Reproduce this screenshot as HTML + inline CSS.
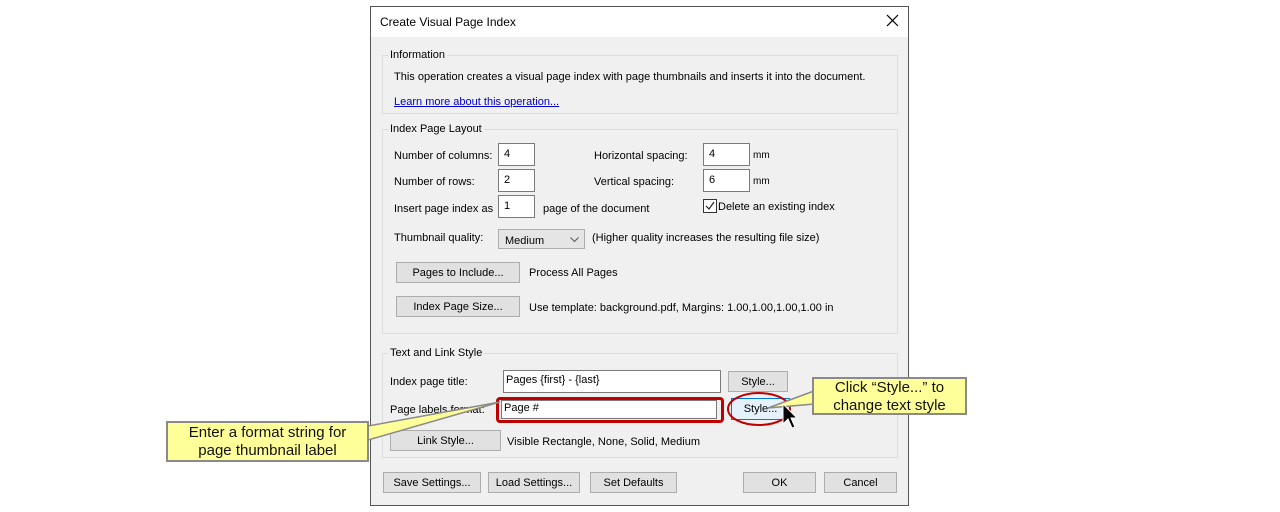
<!DOCTYPE html>
<html><head><meta charset="utf-8"><style>
body{margin:0;width:1280px;height:512px;background:#fff;position:relative;overflow:hidden;font-family:"Liberation Sans",sans-serif;font-size:11px;color:#000}
.a{position:absolute;white-space:nowrap}
.t{position:absolute;white-space:nowrap;line-height:14px}
.g{position:absolute;border:1px solid #dcdcdc}
.lg{position:absolute;background:#f0f0f0;padding:0 2px;line-height:14px}
.in{position:absolute;background:#fff;border:1px solid #7a7a7a;box-sizing:border-box;padding:2px 5px;line-height:16px}
.b{position:absolute;background:#e1e1e1;border:1px solid #adadad;box-sizing:border-box;text-align:center;line-height:19px}
.co{position:absolute;background:#ffff99;border:2px solid #8a8a8a;box-sizing:border-box;text-align:center;font-size:15px;line-height:18px;color:#111}
</style></head><body>
<div class="a" style="left:370px;top:6px;width:537px;height:498px;border:1px solid #555;background:#f0f0f0"></div>
<div class="a" style="left:371px;top:7px;width:537px;height:30px;background:#fff"></div>
<div class="t" style="left:380px;top:15px;font-size:12px">Create Visual Page Index</div>
<svg class="a" style="left:886px;top:14px" width="13" height="13"><path d="M1 1L12 12M12 1L1 12" stroke="#000" stroke-width="1.2"/></svg>

<div class="g" style="left:382px;top:55px;width:514px;height:57px"></div>
<div class="lg" style="left:388px;top:48px">Information</div>
<div class="t" style="left:394px;top:70px">This operation creates a visual page index with page thumbnails and inserts it into the document.</div>
<div class="t" style="left:394px;top:95px;color:#0000cc;text-decoration:underline">Learn more about this operation...</div>

<div class="g" style="left:382px;top:129px;width:514px;height:203px"></div>
<div class="lg" style="left:388px;top:122px">Index Page Layout</div>
<div class="t" style="left:394px;top:149px">Number of columns:</div>
<div class="in" style="left:498px;top:143px;width:37px;height:23px">4</div>
<div class="t" style="left:594px;top:149px">Horizontal spacing:</div>
<div class="in" style="left:703px;top:143px;width:47px;height:23px">4</div>
<div class="t" style="left:753px;top:149px;font-size:10px">mm</div>
<div class="t" style="left:394px;top:175px">Number of rows:</div>
<div class="in" style="left:498px;top:169px;width:37px;height:23px">2</div>
<div class="t" style="left:594px;top:175px">Vertical spacing:</div>
<div class="in" style="left:703px;top:169px;width:47px;height:23px">6</div>
<div class="t" style="left:753px;top:175px;font-size:10px">mm</div>
<div class="t" style="left:394px;top:202px">Insert page index as</div>
<div class="in" style="left:498px;top:195px;width:37px;height:23px">1</div>
<div class="t" style="left:543px;top:202px">page of the document</div>
<svg class="a" style="left:703px;top:199px" width="14" height="14"><rect x="0.5" y="0.5" width="13" height="13" fill="#fff" stroke="#333"/><path d="M3 7l3 3 5-7" fill="none" stroke="#222" stroke-width="1.2"/></svg>
<div class="t" style="left:718px;top:200px">Delete an existing index</div>
<div class="t" style="left:394px;top:231px">Thumbnail quality:</div>
<div class="a" style="left:498px;top:229px;width:87px;height:20px;background:#e5e5e5;border:1px solid #adadad;box-sizing:border-box"></div>
<div class="t" style="left:505px;top:234px">Medium</div>
<svg class="a" style="left:570px;top:237px" width="9" height="6"><path d="M0.5 0.5L4.5 4.5L8.5 0.5" fill="none" stroke="#555"/></svg>
<div class="t" style="left:592px;top:231px">(Higher quality increases the resulting file size)</div>
<div class="b" style="left:396px;top:262px;width:124px;height:21px;line-height:20px">Pages to Include...</div>
<div class="t" style="left:529px;top:266px">Process All Pages</div>
<div class="b" style="left:396px;top:296px;width:124px;height:21px;line-height:20px">Index Page Size...</div>
<div class="t" style="left:529px;top:301px">Use template: background.pdf, Margins: 1.00,1.00,1.00,1.00 in</div>

<div class="g" style="left:382px;top:353px;width:514px;height:103px"></div>
<div class="lg" style="left:388px;top:346px">Text and Link Style</div>
<div class="t" style="left:390px;top:375px">Index page title:</div>
<div class="in" style="left:503px;top:370px;width:218px;height:23px;padding:1px 2px">Pages {first} - {last}</div>
<div class="b" style="left:728px;top:371px;width:60px;height:21px;line-height:20px">Style...</div>
<div class="t" style="left:390px;top:403px">Page labels format:</div>
<div class="a" style="left:496px;top:397px;width:222px;height:20px;border:3px solid #c00000;border-radius:4px"></div>
<div class="in" style="left:501px;top:400px;width:216px;height:19px;padding:0 2px;line-height:14px">Page #</div>
<div class="b" style="left:731px;top:398px;width:59px;height:22px;line-height:21px;background:#e5f1fb;border-color:#0078d7">Style...</div>
<div class="b" style="left:390px;top:430px;width:111px;height:21px;line-height:20px">Link Style...</div>
<div class="t" style="left:507px;top:435px">Visible Rectangle, None, Solid, Medium</div>

<div class="b" style="left:383px;top:472px;width:98px;height:21px;line-height:20px">Save Settings...</div>
<div class="b" style="left:488px;top:472px;width:92px;height:21px;line-height:20px">Load Settings...</div>
<div class="b" style="left:590px;top:472px;width:87px;height:21px;line-height:20px">Set Defaults</div>
<div class="b" style="left:743px;top:472px;width:73px;height:21px;line-height:20px">OK</div>
<div class="b" style="left:824px;top:472px;width:73px;height:21px;line-height:20px">Cancel</div>

<svg class="a" style="left:0;top:0" width="1280" height="512">
<ellipse cx="759" cy="409" rx="31" ry="16" fill="none" stroke="#c00000" stroke-width="2"/>
<polygon points="368,426 500,402 368,440" fill="#ffff99" stroke="#8a8a8a" stroke-width="1.5"/>
<polygon points="814,391 768,408 814,404" fill="#ffff99" stroke="#8a8a8a" stroke-width="1.5"/>
<path d="M783,404 L783,424 L788,419 L792,428 L795,427 L791,418 L797,418 Z" fill="#000" stroke="#fff" stroke-width="1"/>
</svg>
<div class="co" style="left:166px;top:421px;width:203px;height:41px;padding-top:1px">Enter a format string for<br>page thumbnail label</div>
<div class="co" style="left:812px;top:377px;width:155px;height:38px;padding-top:0">Click “Style...” to<br>change text style</div>
</body></html>
